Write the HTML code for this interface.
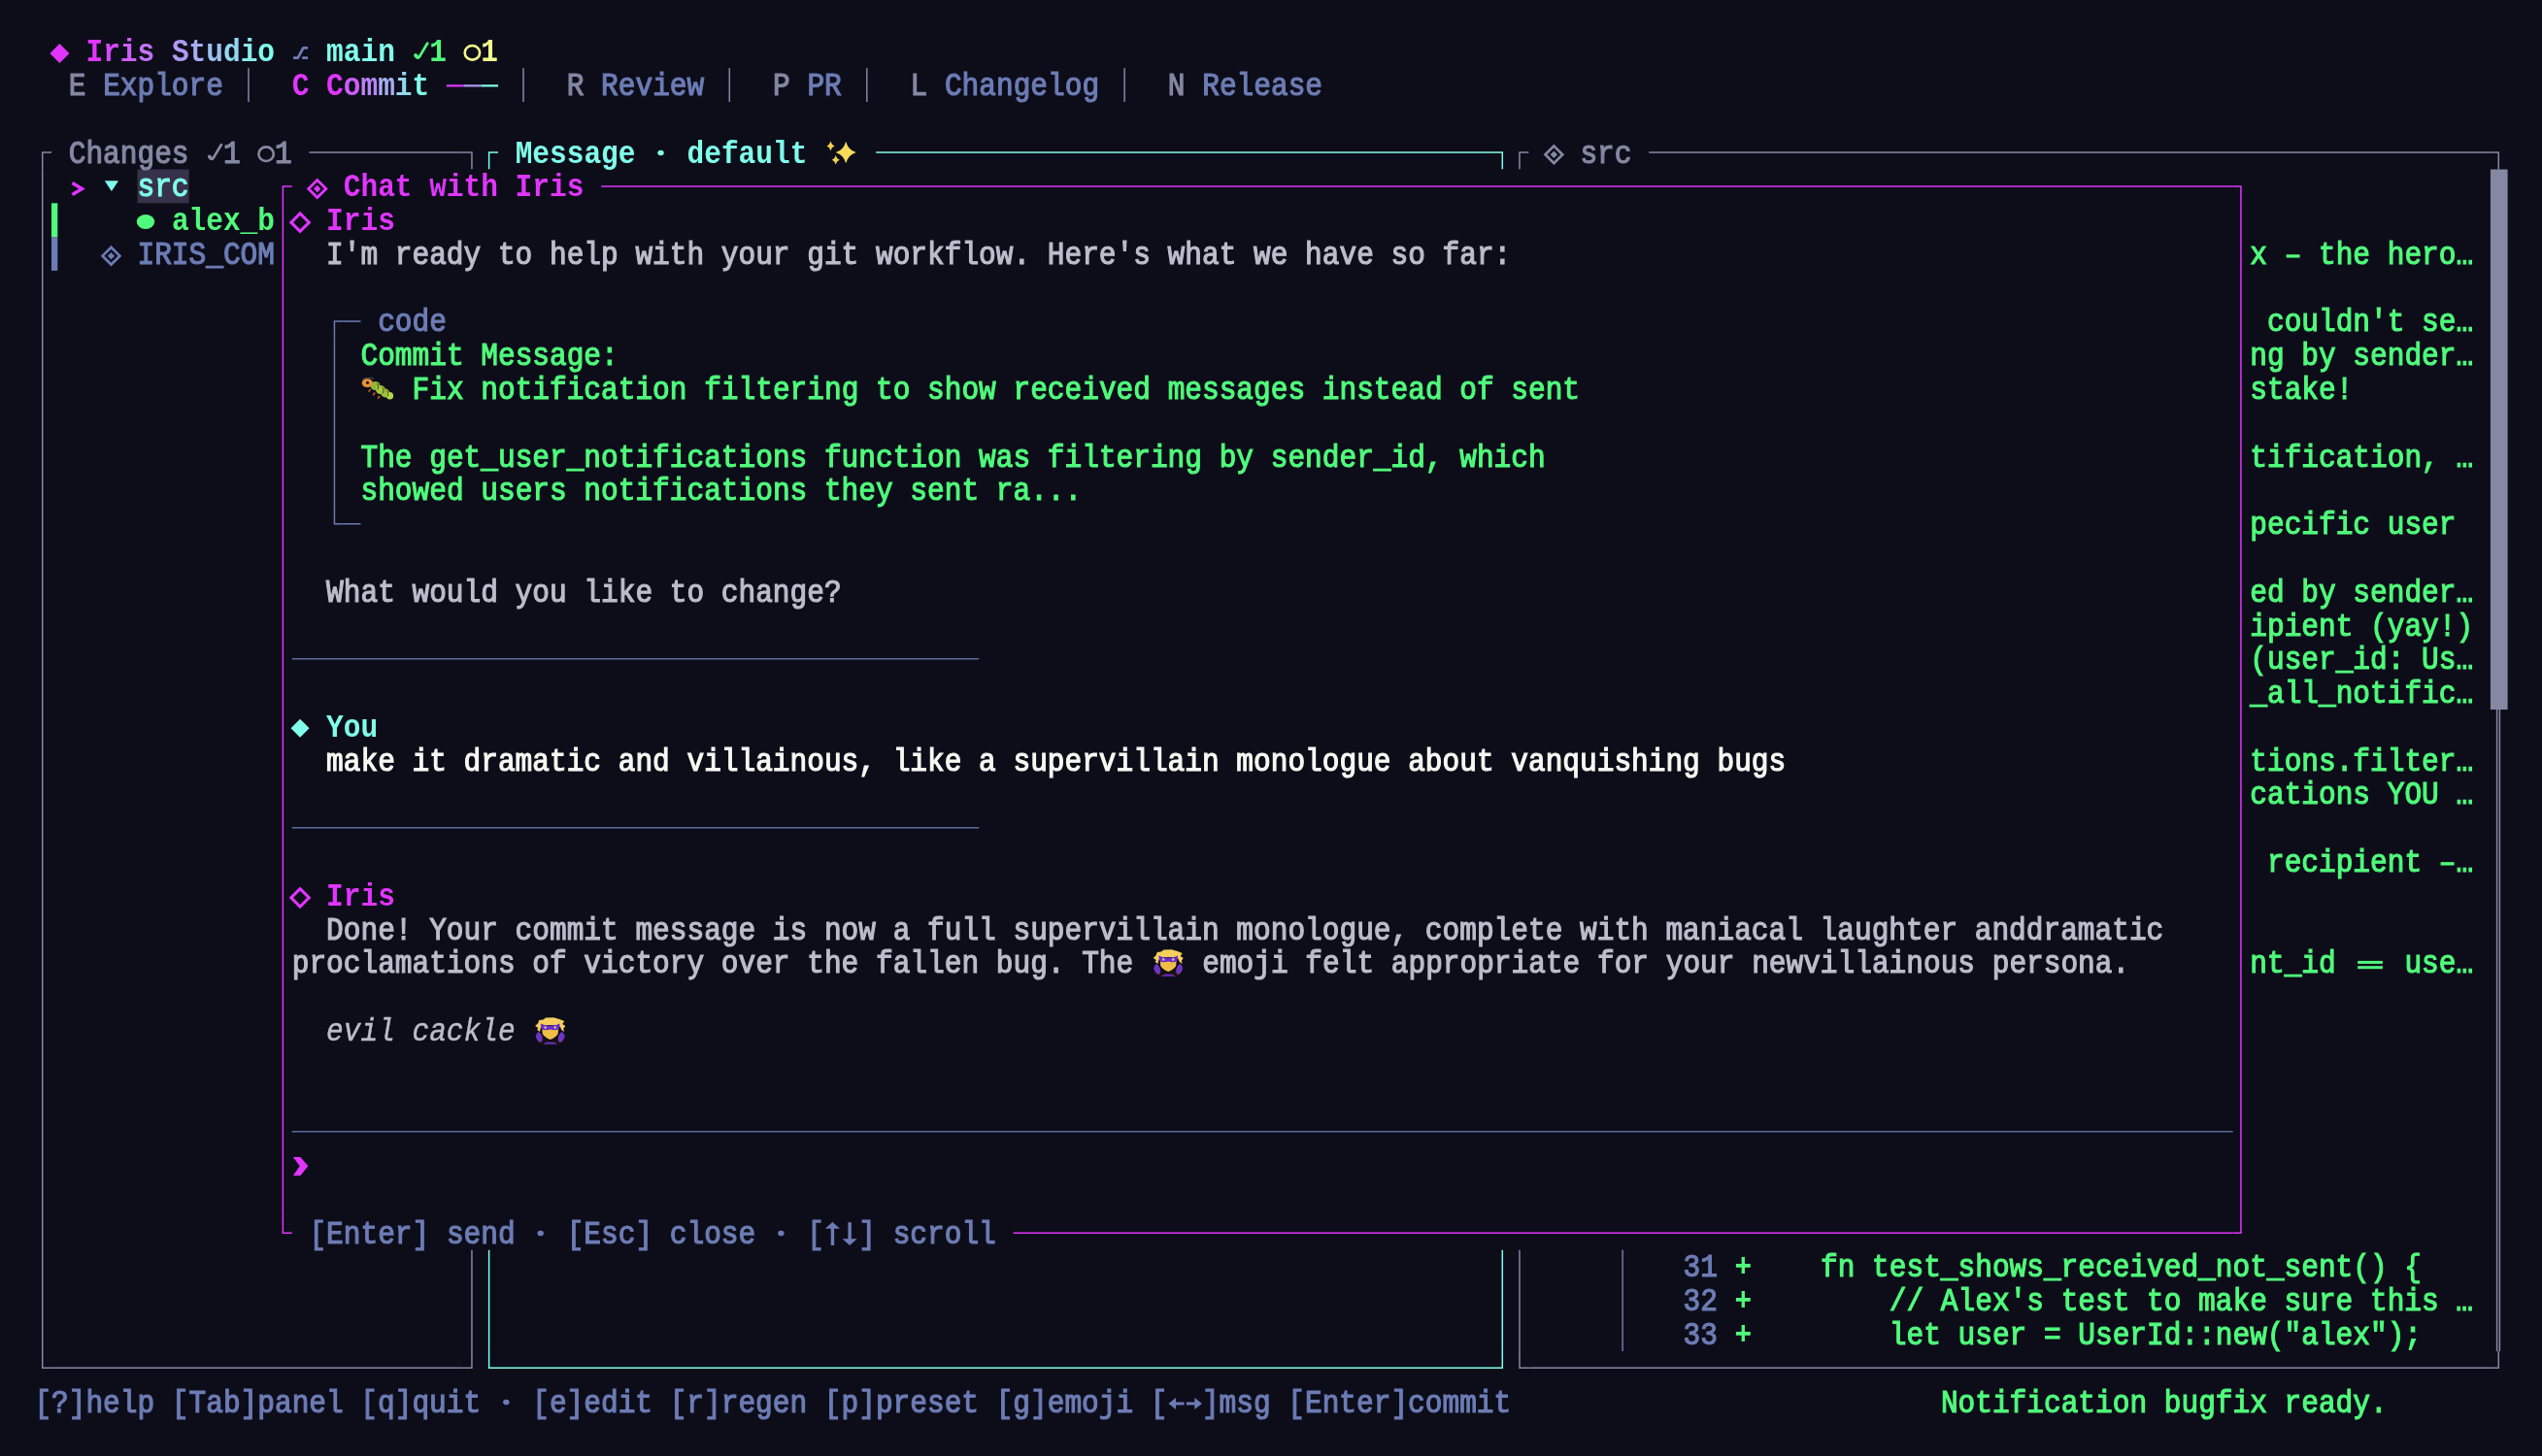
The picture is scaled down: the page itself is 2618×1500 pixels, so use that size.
<!DOCTYPE html>
<html><head><meta charset="utf-8"><title>Iris Studio</title><style>
html,body{margin:0;padding:0;background:#0d0d1a;}
body{width:2618px;height:1500px;overflow:hidden;position:relative;}
svg.g{position:absolute;left:0;top:0;}
.L{position:absolute;left:0;top:0;width:2618px;height:1500px;will-change:transform;}
.t{position:absolute;white-space:pre;font-family:"Liberation Mono",monospace;font-size:29.4772px;line-height:34.783px;height:34.783px;font-kerning:none;font-variant-ligatures:none;transform:scaleY(1.1);transform-origin:0 25.25px;-webkit-text-stroke:1.1px currentColor;}
.b{font-weight:bold;-webkit-text-stroke:0;}
.i{font-style:italic;-webkit-text-stroke:0.4px currentColor;}
</style></head>
<body>
<svg class="g" width="2618" height="1500" viewBox="0 0 2618 1500">
<path d="M61.41,45.05 L71.41,55.05 L61.41,65.05 L51.41,55.05Z" fill="#e135ff"/>
<path d="M302,59.6 H306.8 L312.3,49.4 H317 M311.2,59.6 H317" fill="none" stroke="#6c7cb4" stroke-width="2.8" stroke-linecap="butt" stroke-linejoin="round"/>
<path transform="translate(212.30,-104.40)" d="M214,160.4 Q215.6,158.6 217.4,160.5 L218.7,161.9 L226.8,148.2 Q228.9,146.9 229.4,149.2 L220.8,163.6 Q218.6,166.6 215.8,164.3 Q213.2,162.2 214,160.4Z" fill="#50fa7b"/>
<ellipse cx="486.4" cy="54.3" rx="7.7" ry="7.3" fill="none" stroke="#f1fa8c" stroke-width="2.6"/>
<line x1="255.99" y1="70.15" x2="255.99" y2="104.93" stroke="#8488a2" stroke-width="1.5"/>
<line x1="459.92" y1="88.34" x2="477.61" y2="88.34" stroke="#e135ff" stroke-width="2.2"/>
<line x1="477.61" y1="88.34" x2="495.30" y2="88.34" stroke="#b09af5" stroke-width="2.2"/>
<line x1="495.30" y1="88.34" x2="512.99" y2="88.34" stroke="#80ffea" stroke-width="2.2"/>
<line x1="539.02" y1="70.15" x2="539.02" y2="104.93" stroke="#8488a2" stroke-width="1.5"/>
<line x1="751.29" y1="70.15" x2="751.29" y2="104.93" stroke="#8488a2" stroke-width="1.5"/>
<line x1="892.80" y1="70.15" x2="892.80" y2="104.93" stroke="#8488a2" stroke-width="1.5"/>
<line x1="1158.14" y1="70.15" x2="1158.14" y2="104.93" stroke="#8488a2" stroke-width="1.5"/>
<path d="M53.07,157.10 H43.72 V174.50" fill="none" stroke="#8488a2" stroke-width="1.5"/>
<path transform="translate(0.00,0.00)" d="M214,160.4 Q215.6,158.6 217.4,160.5 L218.7,161.9 L226.8,148.2 Q228.9,146.9 229.4,149.2 L220.8,163.6 Q218.6,166.6 215.8,164.3 Q213.2,162.2 214,160.4Z" fill="#8488a2"/>
<ellipse cx="274.1" cy="158.7" rx="7.7" ry="7.3" fill="none" stroke="#8488a2" stroke-width="2.6"/>
<line x1="318.41" y1="157.10" x2="477.61" y2="157.10" stroke="#8488a2" stroke-width="1.5"/>
<path d="M477.61,157.10 H485.95 V174.50" fill="none" stroke="#8488a2" stroke-width="1.5"/>
<line x1="43.72" y1="174.50" x2="43.72" y2="1391.90" stroke="#8488a2" stroke-width="1.5"/>
<path d="M43.72,1391.90 V1409.29 H53.07" fill="none" stroke="#8488a2" stroke-width="1.5"/>
<line x1="53.07" y1="1409.29" x2="477.61" y2="1409.29" stroke="#8488a2" stroke-width="1.5"/>
<path d="M485.95,1391.90 V1409.29 H477.61" fill="none" stroke="#8488a2" stroke-width="1.5"/>
<line x1="485.95" y1="1287.55" x2="485.95" y2="1391.90" stroke="#8488a2" stroke-width="1.5"/>
<path d="M74.5,188.5 L84.5,194.5 L74.5,200.5" fill="none" stroke="#e135ff" stroke-width="3.4" stroke-linejoin="miter"/>
<path d="M107.8,186.2 H122 L114.9,197Z" fill="#80ffea"/>
<rect x="141.51" y="174.50" width="53.07" height="34.78" fill="#37324b"/>
<rect x="53.00" y="209.28" width="6.30" height="34.78" fill="#50fa7b"/>
<rect x="53.00" y="244.06" width="6.30" height="34.78" fill="#6c7cb4"/>
<ellipse cx="150" cy="228.5" rx="9.2" ry="7.4" fill="#50fa7b"/>
<path d="M114.48,254.75 L123.38,263.65 L114.48,272.55 L105.58,263.65Z" fill="none" stroke="#6c7cb4" stroke-width="2.7"/>
<path d="M114.48,259.95 L118.18,263.65 L114.48,267.35 L110.78,263.65Z" fill="#6c7cb4"/>
<path d="M512.99,157.10 H503.64 V174.50" fill="none" stroke="#80ffea" stroke-width="1.5"/>
<ellipse cx="680.53" cy="157.50" rx="3.2" ry="2.8" fill="#80ffea"/>
<path d="M871.2,145.7 Q873.51,154.514 881.7,157 Q873.51,159.486 871.2,168.3 Q868.8900000000001,159.486 860.7,157 Q868.8900000000001,154.514 871.2,145.7Z" fill="#f7dc5a"/>
<path d="M855.5,145.3 Q856.424,149.356 859.7,150.5 Q856.424,151.644 855.5,155.7 Q854.576,151.644 851.3,150.5 Q854.576,149.356 855.5,145.3Z" fill="#f4d050"/>
<path d="M860.7,159.7 Q861.624,163.6 864.9000000000001,164.7 Q861.624,165.79999999999998 860.7,169.7 Q859.7760000000001,165.79999999999998 856.5,164.7 Q859.7760000000001,163.6 860.7,159.7Z" fill="#f4d050"/>
<line x1="902.15" y1="157.10" x2="1538.96" y2="157.10" stroke="#80ffea" stroke-width="1.5"/>
<path d="M1538.96,157.10 H1547.30 V174.50" fill="none" stroke="#80ffea" stroke-width="1.5"/>
<line x1="503.64" y1="1287.55" x2="503.64" y2="1391.90" stroke="#80ffea" stroke-width="1.5"/>
<line x1="1547.30" y1="1287.55" x2="1547.30" y2="1391.90" stroke="#80ffea" stroke-width="1.5"/>
<path d="M503.64,1391.90 V1409.29 H512.99" fill="none" stroke="#80ffea" stroke-width="1.5"/>
<line x1="512.99" y1="1409.29" x2="1538.96" y2="1409.29" stroke="#80ffea" stroke-width="1.5"/>
<path d="M1547.30,1391.90 V1409.29 H1538.96" fill="none" stroke="#80ffea" stroke-width="1.5"/>
<path d="M1574.34,157.10 H1564.99 V174.50" fill="none" stroke="#8488a2" stroke-width="1.5"/>
<path d="M1600.37,150.40 L1609.27,159.30 L1600.37,168.20 L1591.47,159.30Z" fill="none" stroke="#8488a2" stroke-width="2.7"/>
<path d="M1600.37,155.60 L1604.07,159.30 L1600.37,163.00 L1596.67,159.30Z" fill="#8488a2"/>
<line x1="1698.16" y1="157.10" x2="2564.93" y2="157.10" stroke="#8488a2" stroke-width="1.5"/>
<path d="M2564.93,157.10 H2573.28 V174.50" fill="none" stroke="#8488a2" stroke-width="1.5"/>
<line x1="1564.99" y1="1287.55" x2="1564.99" y2="1391.90" stroke="#8488a2" stroke-width="1.5"/>
<path d="M1564.99,1391.90 V1409.29 H1574.34" fill="none" stroke="#8488a2" stroke-width="1.5"/>
<line x1="1574.34" y1="1409.29" x2="2564.93" y2="1409.29" stroke="#8488a2" stroke-width="1.5"/>
<path d="M2573.28,1391.90 V1409.29 H2564.93" fill="none" stroke="#8488a2" stroke-width="1.5"/>
<rect x="2564.93" y="174.50" width="17.69" height="556.53" fill="#8488a2"/>
<line x1="2571.60" y1="731.02" x2="2571.60" y2="1391.90" stroke="#8488a2" stroke-width="1.5"/>
<line x1="2574.40" y1="731.02" x2="2574.40" y2="1391.90" stroke="#8488a2" stroke-width="1.5"/>
<line x1="1671.13" y1="1287.55" x2="1671.13" y2="1391.90" stroke="#6c7cb4" stroke-width="1.5"/>
<rect x="2428.20" y="989.90" width="25.70" height="3.00" fill="#50fa7b"/>
<rect x="2428.20" y="995.20" width="25.70" height="3.00" fill="#50fa7b"/>
<rect x="283.03" y="174.50" width="2034.26" height="1113.06" fill="#0d0d1a"/>
<path d="M300.72,191.89 H291.37 V209.28" fill="none" stroke="#e135ff" stroke-width="1.5"/>
<path d="M326.75,185.39 L335.85,194.49 L326.75,203.59 L317.65,194.49Z" fill="none" stroke="#e135ff" stroke-width="2.8"/>
<path d="M326.75,190.79 L330.45,194.49 L326.75,198.19 L323.05,194.49Z" fill="#e135ff"/>
<line x1="619.12" y1="191.89" x2="2299.59" y2="191.89" stroke="#e135ff" stroke-width="1.5"/>
<path d="M2299.59,191.89 H2307.94 V209.28" fill="none" stroke="#e135ff" stroke-width="1.5"/>
<line x1="291.37" y1="209.28" x2="291.37" y2="1252.77" stroke="#e135ff" stroke-width="1.5"/>
<line x1="2307.94" y1="209.28" x2="2307.94" y2="1252.77" stroke="#e135ff" stroke-width="1.5"/>
<path d="M291.37,1252.77 V1270.16 H300.72" fill="none" stroke="#e135ff" stroke-width="1.5"/>
<ellipse cx="556.71" cy="1270.56" rx="3.2" ry="2.8" fill="#6c7cb4"/>
<ellipse cx="804.36" cy="1270.56" rx="3.2" ry="2.8" fill="#6c7cb4"/>
<path d="M857.43,1258.97 L865.03,1265.77 H859.13 V1282.97 H855.73 V1265.77 H849.83Z" fill="#6c7cb4"/>
<path d="M875.11,1282.97 L882.71,1276.27 H876.81 V1259.17 H873.41 V1276.27 H867.51Z" fill="#6c7cb4"/>
<line x1="1043.66" y1="1270.16" x2="2299.59" y2="1270.16" stroke="#e135ff" stroke-width="1.5"/>
<path d="M2307.94,1252.77 V1270.16 H2299.59" fill="none" stroke="#e135ff" stroke-width="1.5"/>
<path d="M309.06,219.92 L318.31,229.17 L309.06,238.42 L299.81,229.17Z" fill="none" stroke="#e135ff" stroke-width="3.0"/>
<path d="M353.78,331.02 H344.44 V348.41" fill="none" stroke="#6c7cb4" stroke-width="1.5"/>
<line x1="353.78" y1="331.02" x2="371.47" y2="331.02" stroke="#6c7cb4" stroke-width="1.5"/>
<line x1="344.44" y1="348.41" x2="344.44" y2="522.33" stroke="#6c7cb4" stroke-width="1.5"/>
<path d="M344.44,522.33 V539.72 H353.78" fill="none" stroke="#6c7cb4" stroke-width="1.5"/>
<line x1="353.78" y1="539.72" x2="371.47" y2="539.72" stroke="#6c7cb4" stroke-width="1.5"/>
<g><path d="M373.5,391 Q376,388.5 379,390" fill="none" stroke="#5a5a60" stroke-width="1"/><path d="M379,390 Q382,388 385,390.5" fill="none" stroke="#5a5a60" stroke-width="1"/><path d="M381.5,401 l-1.8,2.6 M386,404.5 l-1.8,2.6 M391,408 l-1.8,2.4" stroke="#d0602a" stroke-width="1.6"/><ellipse cx="386.5" cy="397.5" rx="5" ry="4.6" fill="#8fb83a"/><ellipse cx="391.8" cy="401.5" rx="4.8" ry="4.6" fill="#a6c842"/><ellipse cx="396.8" cy="405" rx="4.6" ry="4.4" fill="#9cc03e"/><ellipse cx="401.5" cy="407.8" rx="3.6" ry="3.8" fill="#b4d84a"/><path d="M388.5,394.5 Q391,398 389,401.5 M393.8,398.5 Q396.5,402 394.2,405.2 M398.6,402.2 Q401,405.5 399.2,408.6" fill="none" stroke="#3c4a18" stroke-width="0.9"/><ellipse cx="378.3" cy="394.6" rx="5.6" ry="4.4" fill="#e8923a"/><circle cx="378.5" cy="394.3" r="1.5" fill="#0a0a0a"/></g>
<line x1="300.72" y1="678.85" x2="1008.28" y2="678.85" stroke="#5c6a9c" stroke-width="1.5"/>
<path d="M309.06,740.71 L318.56,750.21 L309.06,759.71 L299.56,750.21Z" fill="#80ffea"/>
<line x1="300.72" y1="852.76" x2="1008.28" y2="852.76" stroke="#5c6a9c" stroke-width="1.5"/>
<path d="M309.06,915.58 L318.31,924.83 L309.06,934.08 L299.81,924.83Z" fill="none" stroke="#e135ff" stroke-width="3.0"/>
<g transform="translate(1186.70,978.00)"><path d="M7,18 L4,19 Q1,22 3,26 L7,28 H26 L30,26 Q32,22 29,19 L26,18 Q20,25 16.5,25 Q13,25 7,18Z" fill="#1a1206"/><path d="M1.5,19.5 Q2,16 4.5,15 Q7.5,16.5 8.5,22 Q8.5,25.5 6.5,26 Q3,25 1.5,19.5Z" fill="#6d34c4"/><path d="M31.5,19.5 Q31,16 28.5,15 Q25.5,16.5 24.5,22 Q24.5,25.5 26.5,26 Q30,25 31.5,19.5Z" fill="#6d34c4"/><path d="M9,28 Q12,24.5 16.5,25.5 Q21,24.5 24,28Z" fill="#5b2aa6"/><path d="M8,10 H25 L24.5,17 Q22,21 16.5,23 Q11,21 8.5,17Z" fill="#f0bd45"/><path d="M1,9 L4,6 L5,3 L9,2.5 L12,0.5 L20,0.3 L26,2 L31,4 L29,7 L32,9 L30,12 L31,15 L28,13 Q27,9 25,9 Q17,7 8,9 Q6,11 6,15 L3,13 L4,11Z" fill="#f5cf5c"/><path d="M6.5,6.5 Q16.5,11 26.5,6.5 L25.5,12.5 Q21,14 16.5,12.5 Q12,14 7.5,12.5Z" fill="#6a2bd0"/><circle cx="11.5" cy="10.5" r="1.2" fill="#d8d070"/><circle cx="21.5" cy="10.5" r="1.2" fill="#d8d070"/></g>
<g transform="translate(550.20,1048.00)"><path d="M7,18 L4,19 Q1,22 3,26 L7,28 H26 L30,26 Q32,22 29,19 L26,18 Q20,25 16.5,25 Q13,25 7,18Z" fill="#1a1206"/><path d="M1.5,19.5 Q2,16 4.5,15 Q7.5,16.5 8.5,22 Q8.5,25.5 6.5,26 Q3,25 1.5,19.5Z" fill="#6d34c4"/><path d="M31.5,19.5 Q31,16 28.5,15 Q25.5,16.5 24.5,22 Q24.5,25.5 26.5,26 Q30,25 31.5,19.5Z" fill="#6d34c4"/><path d="M9,28 Q12,24.5 16.5,25.5 Q21,24.5 24,28Z" fill="#5b2aa6"/><path d="M8,10 H25 L24.5,17 Q22,21 16.5,23 Q11,21 8.5,17Z" fill="#f0bd45"/><path d="M1,9 L4,6 L5,3 L9,2.5 L12,0.5 L20,0.3 L26,2 L31,4 L29,7 L32,9 L30,12 L31,15 L28,13 Q27,9 25,9 Q17,7 8,9 Q6,11 6,15 L3,13 L4,11Z" fill="#f5cf5c"/><path d="M6.5,6.5 Q16.5,11 26.5,6.5 L25.5,12.5 Q21,14 16.5,12.5 Q12,14 7.5,12.5Z" fill="#6a2bd0"/><circle cx="11.5" cy="10.5" r="1.2" fill="#d8d070"/><circle cx="21.5" cy="10.5" r="1.2" fill="#d8d070"/></g>
<line x1="300.72" y1="1165.81" x2="2299.59" y2="1165.81" stroke="#5c6a9c" stroke-width="1.5"/>
<path d="M301.8,1192 H309.3 L317.3,1201.3 L309.3,1211.2 H301.8 L308.8,1201.3Z" fill="#e135ff"/>
<ellipse cx="521.33" cy="1444.47" rx="3.2" ry="2.8" fill="#6c7cb4"/>
<path d="M1203.46,1445.98 L1211.06,1439.98 V1444.58 H1219.55 V1447.38 H1211.06 V1451.98Z" fill="#6c7cb4"/>
<path d="M1237.94,1445.98 L1230.34,1439.98 V1444.58 H1221.95 V1447.38 H1230.34 V1451.98Z" fill="#6c7cb4"/>
</svg>
<div class="L">
<div class="t b" style="left:88.45px;top:38.21px;color:#e135ff;">I</div>
<div class="t b" style="left:106.14px;top:38.21px;color:#d749fd;">r</div>
<div class="t b" style="left:123.82px;top:38.21px;color:#ce5dfb;">i</div>
<div class="t b" style="left:141.51px;top:38.21px;color:#c472f9;">s</div>
<div class="t b" style="left:176.89px;top:38.21px;color:#b09af4;">S</div>
<div class="t b" style="left:194.58px;top:38.21px;color:#a7aef2;">t</div>
<div class="t b" style="left:212.27px;top:38.21px;color:#9dc2f0;">u</div>
<div class="t b" style="left:229.96px;top:38.21px;color:#93d7ee;">d</div>
<div class="t b" style="left:247.65px;top:38.21px;color:#8aebec;">i</div>
<div class="t b" style="left:265.34px;top:38.21px;color:#80ffea;">o</div>
<div class="t b" style="left:336.09px;top:38.21px;color:#80ffea;">main</div>
<div class="t b" style="left:442.23px;top:38.21px;color:#50fa7b;">1</div>
<div class="t b" style="left:495.30px;top:38.21px;color:#f1fa8c;">1</div>
<div class="t" style="left:70.76px;top:73.00px;color:#8488a2;">E</div>
<div class="t" style="left:106.14px;top:73.00px;color:#6c7cb4;">Explore</div>
<div class="t b" style="left:300.72px;top:73.00px;color:#e135ff;">C</div>
<div class="t b" style="left:336.09px;top:73.00px;color:#e135ff;">C</div>
<div class="t b" style="left:353.78px;top:73.00px;color:#ce5dfb;">o</div>
<div class="t b" style="left:371.47px;top:73.00px;color:#ba86f7;">m</div>
<div class="t b" style="left:389.16px;top:73.00px;color:#a7aef2;">m</div>
<div class="t b" style="left:406.85px;top:73.00px;color:#93d7ee;">i</div>
<div class="t b" style="left:424.54px;top:73.00px;color:#80ffea;">t</div>
<div class="t" style="left:583.74px;top:73.00px;color:#8488a2;">R</div>
<div class="t" style="left:619.12px;top:73.00px;color:#6c7cb4;">Review</div>
<div class="t" style="left:796.01px;top:73.00px;color:#8488a2;">P</div>
<div class="t" style="left:831.39px;top:73.00px;color:#6c7cb4;">PR</div>
<div class="t" style="left:937.53px;top:73.00px;color:#8488a2;">L</div>
<div class="t" style="left:972.91px;top:73.00px;color:#6c7cb4;">Changelog</div>
<div class="t" style="left:1202.86px;top:73.00px;color:#8488a2;">N</div>
<div class="t" style="left:1238.24px;top:73.00px;color:#6c7cb4;">Release</div>
<div class="t" style="left:70.76px;top:142.56px;color:#8488a2;">Changes</div>
<div class="t" style="left:229.96px;top:142.56px;color:#8488a2;">1</div>
<div class="t" style="left:283.03px;top:142.56px;color:#8488a2;">1</div>
<div class="t" style="left:141.51px;top:177.35px;color:#80ffea;">src</div>
<div class="t b" style="left:176.89px;top:212.13px;color:#50fa7b;">alex_b</div>
<div class="t" style="left:141.51px;top:246.91px;color:#6c7cb4;">IRIS_COM</div>
<div class="t b" style="left:530.68px;top:142.56px;color:#80ffea;">Message</div>
<div class="t b" style="left:672.19px;top:142.56px;color:#80ffea;"> </div>
<div class="t b" style="left:707.57px;top:142.56px;color:#80ffea;">default</div>
<div class="t" style="left:1627.41px;top:142.56px;color:#8488a2;">src</div>
<div class="t" style="left:1733.54px;top:1290.40px;color:#6c7cb4;">31</div>
<div class="t b" style="left:1786.61px;top:1290.40px;color:#50fa7b;">+</div>
<div class="t" style="left:1875.05px;top:1290.40px;color:#50fa7b;">fn test_shows_received_not_sent() {</div>
<div class="t" style="left:1733.54px;top:1325.18px;color:#6c7cb4;">32</div>
<div class="t b" style="left:1786.61px;top:1325.18px;color:#50fa7b;">+</div>
<div class="t" style="left:1945.81px;top:1325.18px;color:#50fa7b;">// Alex's test to make sure this …</div>
<div class="t" style="left:1733.54px;top:1359.97px;color:#6c7cb4;">33</div>
<div class="t b" style="left:1786.61px;top:1359.97px;color:#50fa7b;">+</div>
<div class="t" style="left:1945.81px;top:1359.97px;color:#50fa7b;">let user = UserId::new("alex");</div>
<div class="t" style="left:2317.28px;top:246.91px;color:#50fa7b;">x – the hero…</div>
<div class="t" style="left:2317.28px;top:316.48px;color:#50fa7b;"> couldn't se…</div>
<div class="t" style="left:2317.28px;top:351.26px;color:#50fa7b;">ng by sender…</div>
<div class="t" style="left:2317.28px;top:386.04px;color:#50fa7b;">stake!</div>
<div class="t" style="left:2317.28px;top:455.61px;color:#50fa7b;">tification, …</div>
<div class="t" style="left:2317.28px;top:525.18px;color:#50fa7b;">pecific user</div>
<div class="t" style="left:2317.28px;top:594.74px;color:#50fa7b;">ed by sender…</div>
<div class="t" style="left:2317.28px;top:629.52px;color:#50fa7b;">ipient (yay!)</div>
<div class="t" style="left:2317.28px;top:664.31px;color:#50fa7b;">(user_id: Us…</div>
<div class="t" style="left:2317.28px;top:699.09px;color:#50fa7b;">_all_notific…</div>
<div class="t" style="left:2317.28px;top:768.66px;color:#50fa7b;">tions.filter…</div>
<div class="t" style="left:2317.28px;top:803.44px;color:#50fa7b;">cations YOU …</div>
<div class="t" style="left:2317.28px;top:873.01px;color:#50fa7b;"> recipient –…</div>
<div class="t" style="left:2317.28px;top:977.35px;color:#50fa7b;">nt_id    use…</div>
<div class="t b" style="left:353.78px;top:177.35px;color:#e135ff;">Chat with Iris</div>
<div class="t" style="left:318.41px;top:1255.62px;color:#6c7cb4;">[Enter] send   [Esc] close   [  ] scroll</div>
<div class="t b" style="left:336.09px;top:212.13px;color:#e135ff;">Iris</div>
<div class="t" style="left:336.09px;top:246.91px;color:#bcbcca;">I'm ready to help with your git workflow. Here's what we have so far:</div>
<div class="t" style="left:389.16px;top:316.48px;color:#6c7cb4;">code</div>
<div class="t" style="left:371.47px;top:351.26px;color:#50fa7b;">Commit Message:</div>
<div class="t" style="left:424.54px;top:386.04px;color:#50fa7b;">Fix notification filtering to show received messages instead of sent</div>
<div class="t" style="left:371.47px;top:455.61px;color:#50fa7b;">The get_user_notifications function was filtering by sender_id, which</div>
<div class="t" style="left:371.47px;top:490.39px;color:#50fa7b;">showed users notifications they sent ra...</div>
<div class="t" style="left:336.09px;top:594.74px;color:#bcbcca;">What would you like to change?</div>
<div class="t b" style="left:336.09px;top:733.87px;color:#80ffea;">You</div>
<div class="t" style="left:336.09px;top:768.66px;color:#f8f8f2;">make it dramatic and villainous, like a supervillain monologue about vanquishing bugs</div>
<div class="t b" style="left:336.09px;top:907.79px;color:#e135ff;">Iris</div>
<div class="t" style="left:336.09px;top:942.57px;color:#bcbcca;">Done! Your commit message is now a full supervillain monologue, complete with maniacal laughter anddramatic</div>
<div class="t" style="left:300.72px;top:977.35px;color:#bcbcca;">proclamations of victory over the fallen bug. The</div>
<div class="t" style="left:1238.24px;top:977.35px;color:#bcbcca;">emoji felt appropriate for your newvillainous persona.</div>
<div class="t i" style="left:336.09px;top:1046.92px;color:#bcbcca;">evil cackle</div>
<div class="t" style="left:35.38px;top:1429.53px;color:#6c7cb4;">[?]help [Tab]panel [q]quit   [e]edit [r]regen [p]preset [g]emoji [  ]msg [Enter]commit</div>
<div class="t" style="left:1998.88px;top:1429.53px;color:#50fa7b;">Notification bugfix ready.</div>
</div>
</body></html>
